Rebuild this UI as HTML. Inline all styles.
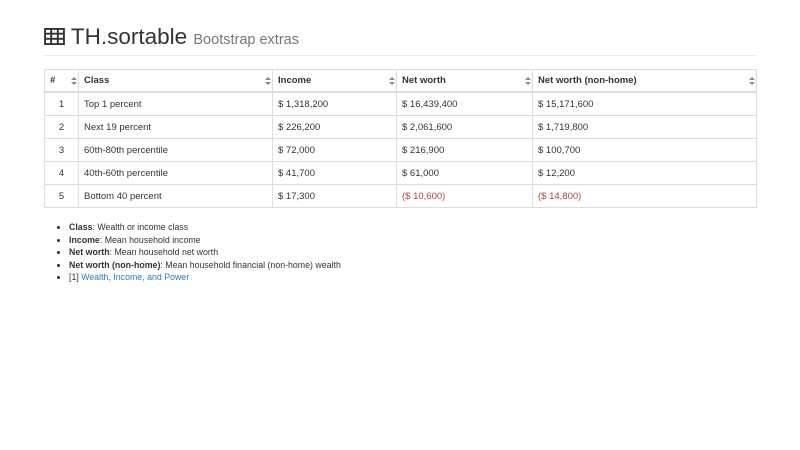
<!DOCTYPE html>
<html><head><meta charset="utf-8"><style>
body{margin:0;background:#fff;font-family:"Liberation Sans",sans-serif;color:#333;width:800px;height:450px;overflow:hidden}
h1{position:absolute;left:44px;top:20px;margin:0;font-weight:400;font-size:22.5px;line-height:34px;color:#333}
h1 small{font-size:14.5px;color:#777}
hr{position:absolute;left:44px;top:55px;width:712px;margin:0;border:0;border-top:1px solid #eee}
table{position:absolute;left:44px;top:69px;border-collapse:collapse;font-size:9.5px;table-layout:fixed;width:713px}
td,th{border:1px solid #ddd;height:22px;padding:0 5px;text-align:left;position:relative}
th{border-bottom:2px solid #ddd;font-weight:bold;height:21px}
th .s{position:absolute;right:4px;top:7px;width:0;height:0}
th .s:before{content:"";position:absolute;left:-3px;top:0;border:3px solid transparent;border-bottom:3px solid #888;border-top:0}
th .s:after{content:"";position:absolute;left:-3px;top:5px;border:3px solid transparent;border-top:3px solid #888;border-bottom:0}
.c{text-align:center}
.r{color:#a94442}
ul{position:absolute;left:49px;top:221px;margin:0;padding-left:20px;font-size:8.8px;line-height:12.5px}
a{color:#337ab7;text-decoration:none}
</style></head><body>
<h1><svg width="21" height="17" viewBox="0 0 22 18" style="vertical-align:-1px"><rect x="1" y="1" width="20" height="16" fill="none" stroke="#333" stroke-width="2"/><path d="M1 6H21M1 11.5H21M7.5 1V17M14.5 1V17" stroke="#333" stroke-width="2"/></svg> TH.sortable <small>Bootstrap extras</small></h1>
<hr>
<table>
<colgroup><col style="width:34px"><col style="width:194px"><col style="width:124px"><col style="width:136px"><col style="width:224px"></colgroup>
<tr><th>#<span class="s"></span></th><th>Class<span class="s"></span></th><th>Income<span class="s"></span></th><th>Net worth<span class="s"></span></th><th>Net worth (non-home)<span class="s"></span></th></tr>
<tr><td class="c">1</td><td>Top 1 percent</td><td>$ 1,318,200</td><td>$ 16,439,400</td><td>$ 15,171,600</td></tr>
<tr><td class="c">2</td><td>Next 19 percent</td><td>$ 226,200</td><td>$ 2,061,600</td><td>$ 1,719,800</td></tr>
<tr><td class="c">3</td><td>60th-80th percentile</td><td>$ 72,000</td><td>$ 216,900</td><td>$ 100,700</td></tr>
<tr><td class="c">4</td><td>40th-60th percentile</td><td>$ 41,700</td><td>$ 61,000</td><td>$ 12,200</td></tr>
<tr><td class="c">5</td><td>Bottom 40 percent</td><td>$ 17,300</td><td class="r">($ 10,600)</td><td class="r">($ 14,800)</td></tr>
</table>
<ul>
<li><b>Class</b>: Wealth or income class</li>
<li><b>Income</b>: Mean household income</li>
<li><b>Net worth</b>: Mean household net worth</li>
<li><b>Net worth (non-home)</b>: Mean household financial (non-home) wealth</li>
<li>[1] <a>Wealth, Income, and Power</a></li>
</ul>
</body></html>
